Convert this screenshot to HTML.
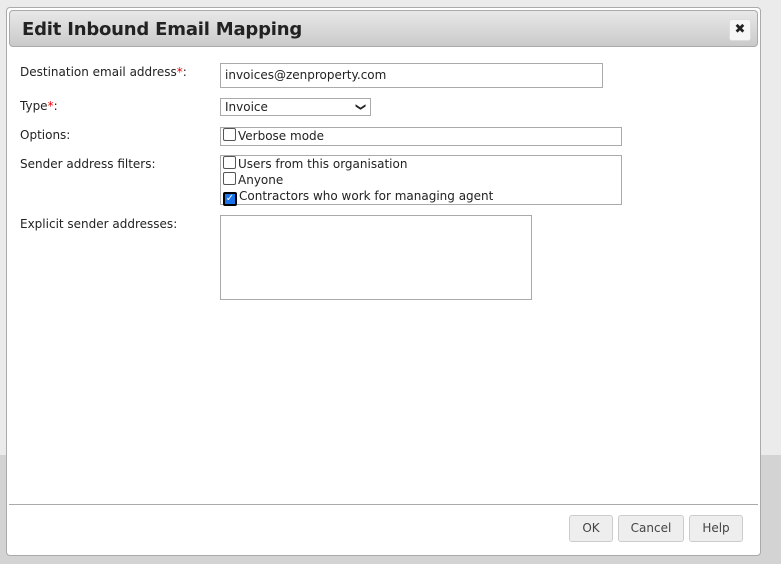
<!DOCTYPE html>
<html><head><style>
body{margin:0;width:781px;height:564px;position:relative;overflow:hidden;font-family:"DejaVu Sans","Liberation Sans",sans-serif;font-size:12px;color:#222;background:#d3d3d3}
.top{position:absolute;left:0;top:0;width:781px;height:455px;background:#ebebeb}
.dlg{position:absolute;left:6px;top:7px;width:753px;height:547px;background:#fff;border:1px solid #aaa;border-radius:4px}
.tb{position:absolute;left:2px;top:2px;width:747px;height:35px;border:1px solid #aaa;border-radius:4px;background:linear-gradient(#e8e8e8,#cacaca)}
.tb h1{margin:0;position:absolute;left:12px;top:8px;font-size:18px;font-weight:bold;color:#222;letter-spacing:-0.2px}
.x{position:absolute;right:6px;top:8px;width:20px;height:20px;background:#f6f6f6;border:1px solid #ddd;border-radius:3px;text-align:center;font-weight:bold;line-height:20px;font-size:13px}
.l{position:absolute;left:13px;font-size:12px}
.r{color:#e00}
.box{position:absolute;border:1px solid #aaa;background:#fff}
.cb{display:inline-block;width:11px;height:11px;border:1px solid #555;border-radius:2px;vertical-align:-1px;margin-right:2px}
.row{height:16px;line-height:16px;padding-left:3px}
.btn{position:absolute;top:507px;height:25px;border:1px solid #ccc;border-radius:3px;background:#eee;color:#444;text-align:center;line-height:25px}
</style></head><body>
<div class="top"></div>
<div class="dlg">
<div class="tb"><h1>Edit Inbound Email Mapping</h1><div class="x">✖</div></div>
<div class="l" style="top:57px">Destination email address<span class="r">*</span>:</div>
<div class="box" style="left:213px;top:55px;width:377px;height:23px;line-height:23px;padding-left:4px">invoices@zenproperty.com</div>
<div class="l" style="top:91px">Type<span class="r">*</span>:</div>
<div class="box" style="left:213px;top:90px;width:145px;height:16px;line-height:16px;padding-left:4px">Invoice<span style="position:absolute;right:6px;top:0;font-size:10px;display:inline-block;transform:rotate(90deg)">❯</span></div>
<div class="l" style="top:120px">Options:</div>
<div class="box" style="left:213px;top:119px;width:400px;height:17px"><div class="row" style="padding-left:2px"><span class="cb"></span>Verbose mode</div></div>
<div class="l" style="top:149px">Sender address filters:</div>
<div class="box" style="left:213px;top:147px;width:400px;height:48px">
<div class="row" style="padding-left:2px"><span class="cb"></span>Users from this organisation</div>
<div class="row" style="padding-left:2px"><span class="cb"></span>Anyone</div>
<div class="row" style="padding-left:2px"><span class="cb" style="background:#1a73e8;border:2px solid #000;width:10px;height:10px;color:#fff;font-size:10px;line-height:10px;text-align:center">✓</span>Contractors who work for managing agent</div>
</div>
<div class="l" style="top:209px">Explicit sender addresses:</div>
<div class="box" style="left:213px;top:207px;width:310px;height:83px"></div>
<div style="position:absolute;left:2px;top:496px;width:749px;height:1px;background:#aaa"></div>
<div class="btn" style="left:562px;width:42px">OK</div>
<div class="btn" style="left:611px;width:64px">Cancel</div>
<div class="btn" style="left:682px;width:52px">Help</div>
</div>
</body></html>
